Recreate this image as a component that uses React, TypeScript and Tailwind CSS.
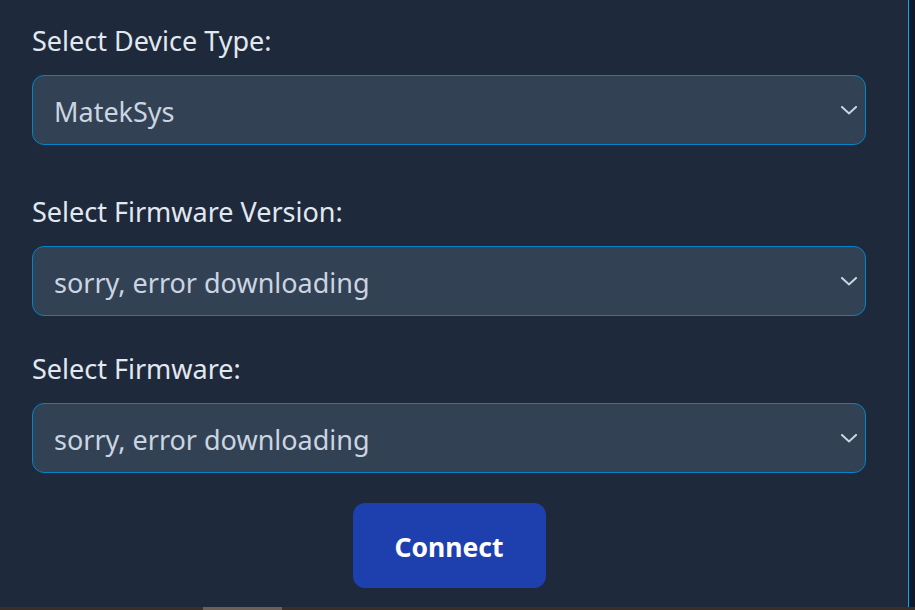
import React from "react";

const Chevron = () => (
  <svg width="16" height="9" viewBox="0 0 16 9" fill="none" className="shrink-0">
    <path d="M1 1 L8 7.5 L15 1" stroke="#cbd5e1" strokeWidth="2" strokeLinecap="square" />
  </svg>
);

const SelectBox = ({ value }: { value: string }) => (
  <div className="flex h-[70px] w-full items-center justify-between rounded-[12px] border border-[#0284c7] bg-[#334155] pl-[21px] pr-[8px]">
    <span className="pt-[3px] text-[27px] leading-none text-[#cbd5e1]">{value}</span>
    <Chevron />
  </div>
);

export default function App() {
  return (
    <div
      className="flex h-[610px] w-[915px] flex-col overflow-hidden bg-[#1e293b]"
      style={{ fontFamily: '"Noto Sans", "Open Sans", sans-serif' }}
    >
      <div className="flex h-[607px] w-full">
        <div className="flex w-[909px] flex-col border-r border-[#0ea5e9] bg-[#1e293b] pl-[32px] pr-[42px] pt-[24px]">
          <div className="mb-[18px] text-[27px] leading-[33px] text-[#e2e8f0]">Select Device Type:</div>
          <SelectBox value="MatekSys" />
          <div className="mb-[18px] mt-[50px] text-[27px] leading-[33px] text-[#e2e8f0]">Select Firmware Version:</div>
          <SelectBox value="sorry, error downloading" />
          <div className="mb-[18px] mt-[36px] text-[27px] leading-[33px] text-[#e2e8f0]">Select Firmware:</div>
          <SelectBox value="sorry, error downloading" />
          <div className="mt-[30px] flex justify-center">
            <button className="flex h-[85px] w-[193px] items-center justify-center rounded-[12px] bg-[#1e40af] pt-[5px] text-[26.5px] font-bold text-white">
              Connect
            </button>
          </div>
        </div>
        <div className="flex-1 bg-[#0f172a]" />
      </div>
      <div className="h-[3px] w-full bg-[#3a2f28]">
        <div className="ml-[203px] h-full w-[79px] bg-[#6b5f58]" />
      </div>
    </div>
  );
}
